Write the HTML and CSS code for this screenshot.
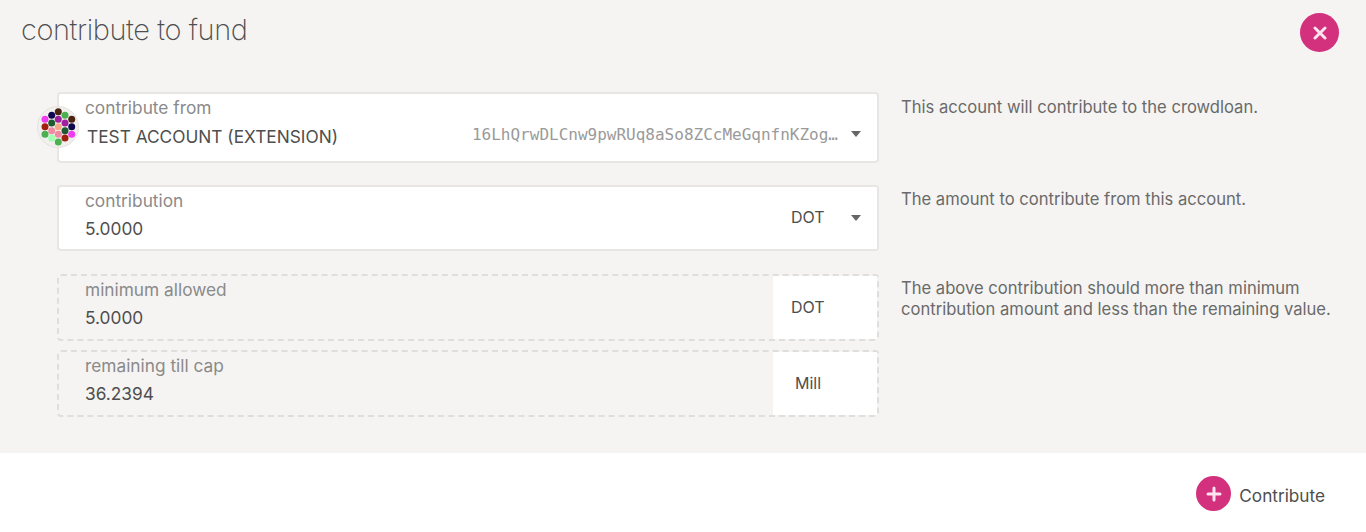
FILE: index.html
```html
<!DOCTYPE html>
<html lang="en">
<head>
    <meta charset="UTF-8">
    <meta name="viewport" content="width=device-width, initial-scale=1.0">
    <title>contribute to fund</title>
    <link rel="stylesheet" href="styles.css">
</head>
<body>
<div class="modal">
    <header class="modal-header">
        <h1>contribute to fund</h1>
        <button type="button" class="close-button" aria-label="close">
            <svg viewBox="0 0 14 14" width="14" height="14"><path d="M2 2l10 10M12 2L2 12" stroke="#fbe4ee" stroke-width="3" stroke-linecap="round"/></svg>
        </button>
    </header>

    <section class="modal-content">
        <div class="row row-account">
            <div class="field solid account-field">
                <svg class="identicon" viewBox="0 0 42 42" width="42" height="42">
                    <circle cx="21" cy="21" r="20.5" fill="#f1f0ee" stroke="#e4e2df"/>
                    <circle cx="21.3" cy="5.7" r="3.5" fill="#4a2410"/>
                    <circle cx="14.7" cy="9.3" r="3.5" fill="#12084f"/>
                    <circle cx="28" cy="9.3" r="3.5" fill="#4caf50"/>
                    <circle cx="8" cy="13.3" r="3.5" fill="#f03cf0"/>
                    <circle cx="21.3" cy="13.3" r="3.5" fill="#a020a0"/>
                    <circle cx="34.7" cy="13.3" r="3.5" fill="#4a2410"/>
                    <circle cx="14.7" cy="17" r="3.5" fill="#1f5a30"/>
                    <circle cx="28" cy="17" r="3.5" fill="#a020a0"/>
                    <circle cx="8" cy="20.7" r="3.5" fill="#a02010"/>
                    <circle cx="21.3" cy="20.7" r="3.5" fill="#f4a988"/>
                    <circle cx="34.7" cy="20.7" r="3.5" fill="#12084f"/>
                    <circle cx="14.7" cy="24.7" r="3.5" fill="#f08aa0"/>
                    <circle cx="28" cy="24.7" r="3.5" fill="#1f5a30"/>
                    <circle cx="8" cy="28.3" r="3.5" fill="#4caf50"/>
                    <circle cx="21.3" cy="28.3" r="3.5" fill="#f08aa0"/>
                    <circle cx="34.7" cy="28.3" r="3.5" fill="#f03cf0"/>
                    <circle cx="14.7" cy="32" r="3.5" fill="#a0ffb0"/>
                    <circle cx="28" cy="32" r="3.5" fill="#a02010"/>
                    <circle cx="21.3" cy="36" r="3.5" fill="#4caf50"/>
                </svg>
                <label>contribute from</label>
                <div class="account-line">
                    <span class="account-name">TEST ACCOUNT (EXTENSION)</span>
                    <span class="account-address">16LhQrwDLCnw9pwRUq8aSo8ZCcMeGqnfnKZog…</span>
                    <span class="caret"></span>
                </div>
            </div>
            <p class="help help-first">This account will contribute to the crowdloan.</p>
        </div>

        <div class="row row-contribution">
            <div class="field solid">
                <div class="field-main">
                    <label>contribution</label>
                    <div class="value">5.0000</div>
                </div>
                <div class="unit unit-select">DOT<span class="caret"></span></div>
            </div>
            <p class="help">The amount to contribute from this account.</p>
        </div>

        <div class="row row-limits">
            <div class="limits">
                <div class="field dashed">
                    <div class="field-main">
                        <label>minimum allowed</label>
                        <div class="value">5.0000</div>
                    </div>
                    <div class="unit">DOT</div>
                </div>
                <div class="field dashed">
                    <div class="field-main">
                        <label>remaining till cap</label>
                        <div class="value">36.2394</div>
                    </div>
                    <div class="unit unit-mill">Mill</div>
                </div>
            </div>
            <p class="help">The above contribution should more than minimum contribution amount and less than the remaining value.</p>
        </div>
    </section>

    <footer class="modal-footer">
        <button type="button" class="contribute-button">
            <span class="plus-icon">
                <svg viewBox="0 0 16 16" width="16" height="16"><path d="M8 2v12M2 8h12" stroke="#fbe4ee" stroke-width="3" stroke-linecap="round"/></svg>
            </span>
            <span class="contribute-text">Contribute</span>
        </button>
    </footer>
</div>
</body>
</html>
```

FILE: styles.css
```css
* {
    box-sizing: border-box;
}

body {
    font-family: Inter, "Noto Sans", sans-serif;
    margin: 0;
    padding: 0;
    background-color: #fff;
    color: #4e4e4e;
}

.modal {
    height: 532px;
    display: flex;
    flex-direction: column;
}

.modal-header {
    display: flex;
    justify-content: space-between;
    align-items: flex-start;
    height: 92px;
    padding: 13px 27px 0 21px;
    background-color: #f5f4f2;
}

.modal-header h1 {
    margin: 0;
    font-size: 29px;
    line-height: 34px;
    font-weight: 200;
    letter-spacing: -0.42px;
    color: #4e4e4e;
}

.close-button {
    display: flex;
    align-items: center;
    justify-content: center;
    width: 39px;
    height: 39px;
    padding: 0;
    border: none;
    border-radius: 50%;
    background-color: #d3307d;
}

.modal-content {
    height: 361px;
    padding: 0 30px 0 57px;
    background-color: #f5f4f2;
}

.row {
    display: flex;
    gap: 22px;
}

.row-account {
    margin-bottom: 22px;
}

.row-contribution {
    margin-bottom: 23px;
}

.row > .field,
.limits {
    flex: 0 0 822px;
}

.limits {
    display: flex;
    flex-direction: column;
    gap: 9px;
}

.field {
    display: flex;
    position: relative;
    height: 66px;
    border-radius: 4px;
}

.solid {
    border: 2px solid #e8e6e3;
    background-color: #fff;
}

.dashed {
    height: 67px;
    border: 2px dashed #e0dedb;
}

.account-field {
    display: block;
    height: 71px;
    padding: 3px 0 0 26px;
}

.identicon {
    position: absolute;
    left: -22px;
    top: 12px;
}

label {
    display: block;
    font-size: 17.3px;
    line-height: 22px;
    color: #8a8a8a;
}

.field-main {
    flex: 1;
    padding: 3px 0 0 26px;
}

.value {
    margin-top: 6px;
    font-size: 17.3px;
    line-height: 22px;
    color: #4e4e4e;
}

.account-line {
    display: flex;
    align-items: center;
    margin-top: 6px;
    padding-right: 16px;
}

.account-name {
    margin-left: 2px;
    font-size: 17.3px;
    line-height: 24px;
}

.account-address {
    margin-left: auto;
    margin-right: 13px;
    margin-bottom: 5px;
    font-family: "DejaVu Sans Mono", monospace;
    font-size: 16px;
    color: #9a9a9a;
}

.account-line .caret {
    margin-bottom: 6px;
}

.caret {
    width: 0;
    height: 0;
    border-left: 5px solid transparent;
    border-right: 5px solid transparent;
    border-top: 6px solid #666;
}

.unit {
    flex: 0 0 104px;
    display: flex;
    align-items: center;
    padding-left: 18px;
    padding-bottom: 1px;
    font-size: 16px;
    background-color: #fff;
}

.unit-select {
    justify-content: space-between;
    padding-right: 16px;
    padding-bottom: 2px;
}

.unit-select .caret {
    margin-top: 2px;
}

.unit-mill {
    padding-left: 22px;
}

.help {
    margin: 0;
    padding-top: 4px;
    font-size: 16.6px;
    line-height: 21px;
    color: #6a6a6a;
}

.help-first {
    padding-top: 5px;
}

.modal-footer {
    flex: 1;
    display: flex;
    justify-content: flex-end;
    align-items: flex-start;
    padding: 23px 41px 0 0;
    background-color: #fff;
}

.contribute-button {
    display: flex;
    align-items: center;
    gap: 8px;
    padding: 0;
    border: none;
    background: none;
    font-family: inherit;
    font-size: 17.2px;
    color: #4e4e4e;
}

.contribute-text {
    margin-top: 4px;
}

.plus-icon {
    display: flex;
    align-items: center;
    justify-content: center;
    width: 35px;
    height: 35px;
    border-radius: 50%;
    background-color: #d3307d;
}
```
